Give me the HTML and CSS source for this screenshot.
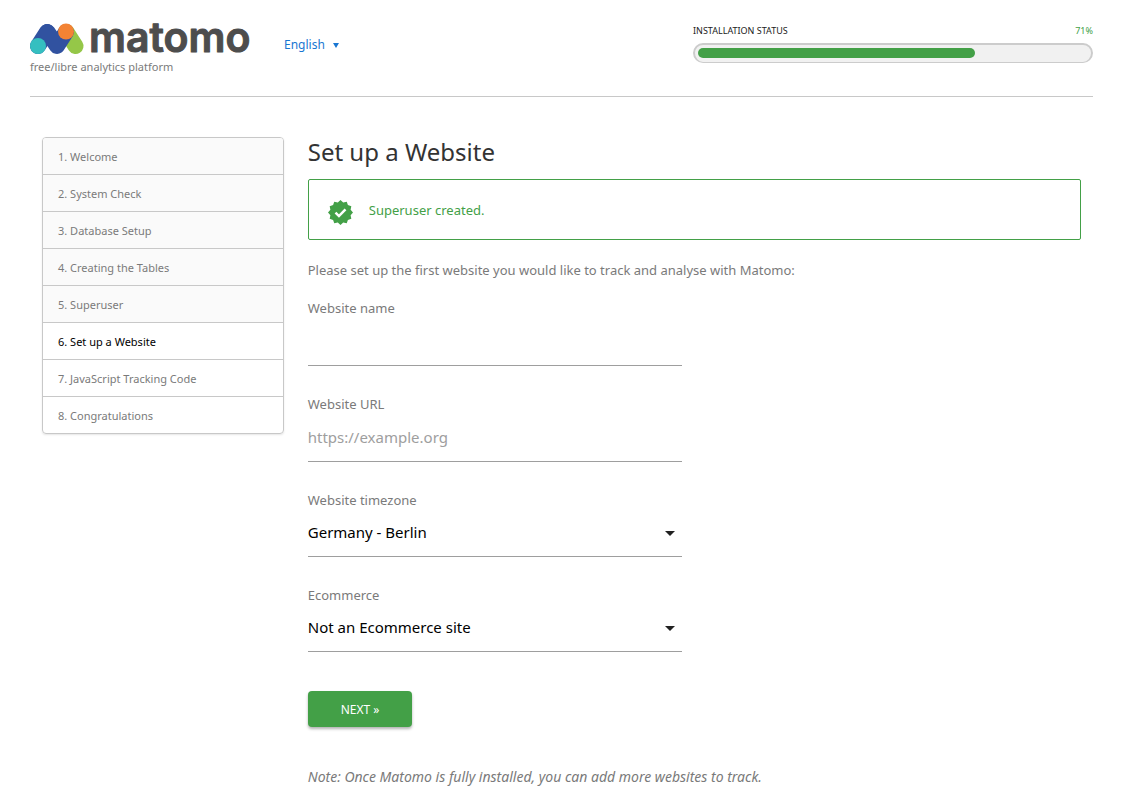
FILE: index.html
```html
<!DOCTYPE html>
<html lang="en">
<head>
    <meta charset="UTF-8">
    <meta name="viewport" content="width=device-width, initial-scale=1">
    <title>Matomo - Installation</title>
    <link rel="stylesheet" href="styles.css">
</head>
<body>

<header class="header">
    <div class="brand">
        <svg class="logo" width="222" height="36" viewBox="0 0 222 36" role="img" aria-label="matomo">
            <path d="M36.500 9L45.500 23" stroke="#95c748" stroke-width="16" stroke-linecap="round"/>
            <path d="M8 23L17 9" stroke="#3152a0" stroke-width="16" stroke-linecap="round"/>
            <path d="M17.500 9L27 23L36 9" fill="none" stroke="#3152a0" stroke-width="16" stroke-linecap="round" stroke-linejoin="round"/>
            <circle cx="36" cy="8.500" r="8" fill="#f38334"/>
            <circle cx="8" cy="23" r="8" fill="#35bfc0"/>
            <text class="wordmark" x="59" y="29">matomo</text>
        </svg>
        <div class="tagline">free/libre analytics platform</div>
    </div>
    <button type="button" class="language">English <span class="language-arrow"></span></button>
    <div class="status">
        <div class="status-text">
            <span id="status_label">INSTALLATION STATUS</span>
            <span class="percent">71%</span>
        </div>
        <div class="progress" role="progressbar" aria-labelledby="status_label" aria-valuenow="71" aria-valuemin="0" aria-valuemax="100">
            <div class="progress-bar" style="width: 71%"></div>
        </div>
    </div>
</header>

<div class="container">
    <nav class="sidebar">
        <ol class="steps">
            <li class="done">1. Welcome</li>
            <li class="done">2. System Check</li>
            <li class="done">3. Database Setup</li>
            <li class="done">4. Creating the Tables</li>
            <li class="done">5. Superuser</li>
            <li class="current">6. Set up a Website</li>
            <li>7. JavaScript Tracking Code</li>
            <li>8. Congratulations</li>
        </ol>
    </nav>

    <main class="content">
        <h1>Set up a Website</h1>

        <div class="alert">
            <svg width="25" height="25" viewBox="0 0 24 24" aria-hidden="true">
                <path fill="#43a047" d="M12 0l2.600 2.300L18 1.600l1.100 3.300L22.400 6l-.7 3.400L24 12l-2.300 2.600.7 3.400-3.300 1.100L18 22.400l-3.400-.7L12 24l-2.600-2.300-3.400.7-1.100-3.300L1.600 18l.7-3.400L0 12l2.300-2.600L1.600 6l3.300-1.100L6 1.600l3.400.7z"/>
                <path fill="none" stroke="#fff" stroke-width="2.400" d="M7.200 12.200l3.300 3.200 6.300-6.400"/>
            </svg>
            <span>Superuser created.</span>
        </div>

        <p class="intro">Please set up the first website you would like to track and analyse with Matomo:</p>

        <form class="site-form" method="post">
            <div class="field">
                <label for="siteName">Website name</label>
                <input type="text" id="siteName" name="siteName">
            </div>
            <div class="field">
                <label for="url">Website URL</label>
                <input type="text" id="url" name="url" placeholder="https://example.org">
            </div>
            <div class="field">
                <label for="timezone">Website timezone</label>
                <select id="timezone" name="timezone">
                    <option>Germany - Berlin</option>
                </select>
            </div>
            <div class="field">
                <label for="ecommerce">Ecommerce</label>
                <select id="ecommerce" name="ecommerce">
                    <option>Not an Ecommerce site</option>
                </select>
            </div>
            <button type="submit" class="next">NEXT »</button>
        </form>

        <p class="note">Note: Once Matomo is fully installed, you can add more websites to track.</p>
    </main>
</div>

</body>
</html>
```
FILE: styles.css
```css
* {
    box-sizing: border-box;
}

body {
    margin: 0;
    padding: 0 30px;
    background: #fff;
    color: #7a7a7a;
    font-family: "Noto Sans", "Open Sans", sans-serif;
    font-size: 13px;
    line-height: 20px;
}

.header {
    display: flex;
    align-items: flex-start;
    padding: 23px 0 21px;
    border-bottom: 1px solid #c8c8c8;
}

.logo {
    display: block;
    overflow: visible;
}

.wordmark {
    font-family: Inter, sans-serif;
    font-size: 41px;
    font-weight: 600;
    fill: #4d4d4d;
    stroke: #4d4d4d;
    stroke-width: 1;
    stroke-linejoin: round;
}

.tagline {
    font-size: 11px;
    line-height: 16px;
}

.language {
    display: flex;
    align-items: center;
    gap: 8px;
    margin: 12px 0 0 32px;
    padding: 0;
    border: none;
    background: none;
    color: #1976d2;
    font-family: inherit;
    font-size: 12px;
    line-height: 20px;
}

.language-arrow {
    border: 3px solid transparent;
    border-top: 5px solid #1976d2;
    border-bottom: none;
}

.status {
    width: 400px;
    margin-left: auto;
}

.status-text {
    display: flex;
    justify-content: space-between;
    color: #212121;
    font-size: 9px;
    line-height: 16px;
}

.status-text .percent {
    color: #43a047;
}

.progress {
    height: 20px;
    margin-top: 4px;
    padding: 3px;
    border: 2px solid #ccc;
    border-bottom-width: 1px;
    border-radius: 10px;
    background: #f1f1f1;
}

.progress-bar {
    height: 10px;
    border-radius: 5px;
    background: #43a047;
}

.container {
    display: grid;
    grid-template-columns: 1fr 3fr;
    padding-top: 40px;
}

.sidebar, .content {
    min-width: 0;
    padding: 0 12px;
}

.steps {
    margin: 0;
    padding: 0;
    list-style: none;
    border: 1px solid #c8c8c8;
    border-radius: 4px;
    box-shadow: 0 1px 2px rgba(0, 0, 0, 0.1);
    overflow: hidden;
    font-size: 11px;
    line-height: 18px;
}

.steps li {
    padding: 10px 15px 8px;
}

.steps li + li {
    border-top: 1px solid #c8c8c8;
}

.steps .done {
    background: #fafafa;
}

.steps .current {
    color: #000;
}

h1 {
    margin: 0 0 12px;
    color: #333;
    font-size: 24px;
    font-weight: 400;
    line-height: 30px;
}

.alert {
    display: flex;
    align-items: flex-start;
    gap: 16px;
    min-height: 61px;
    padding: 20px 19px 14px;
    border: 1px solid #43a047;
    border-radius: 2px;
    color: #43a047;
}

.intro {
    margin: 20px 0 18px;
}

.site-form {
    width: calc(50% + 12px);
    padding-right: 24px;
}

.field {
    margin-bottom: 28px;
}

.field label {
    display: block;
}

.field input, .field select {
    display: block;
    width: 100%;
    height: 48px;
    padding: 0 0 2px;
    border: none;
    border-bottom: 1px solid #9e9e9e;
    border-radius: 0;
    background: none;
    color: #000;
    font-family: inherit;
    font-size: 15px;
}

.field input::placeholder {
    color: #9e9e9e;
}

.field select {
    height: 47px;
    appearance: none;
    background: url("data:image/svg+xml,%3Csvg xmlns='http://www.w3.org/2000/svg' width='10' height='5'%3E%3Cpath d='M0 0h10L5 5z' fill='%23212121'/%3E%3C/svg%3E") right 7px top 21px no-repeat;
}

.next {
    display: block;
    height: 36px;
    margin-top: 39px;
    padding: 0 33px;
    border: none;
    border-radius: 4px;
    background: #43a047;
    box-shadow: 0 2px 3px rgba(0, 0, 0, 0.3);
    color: #fff;
    font-family: inherit;
    font-size: 12px;
}

.note {
    margin: 40px 0 20px;
    font-size: 14px;
    font-style: italic;
}
```
